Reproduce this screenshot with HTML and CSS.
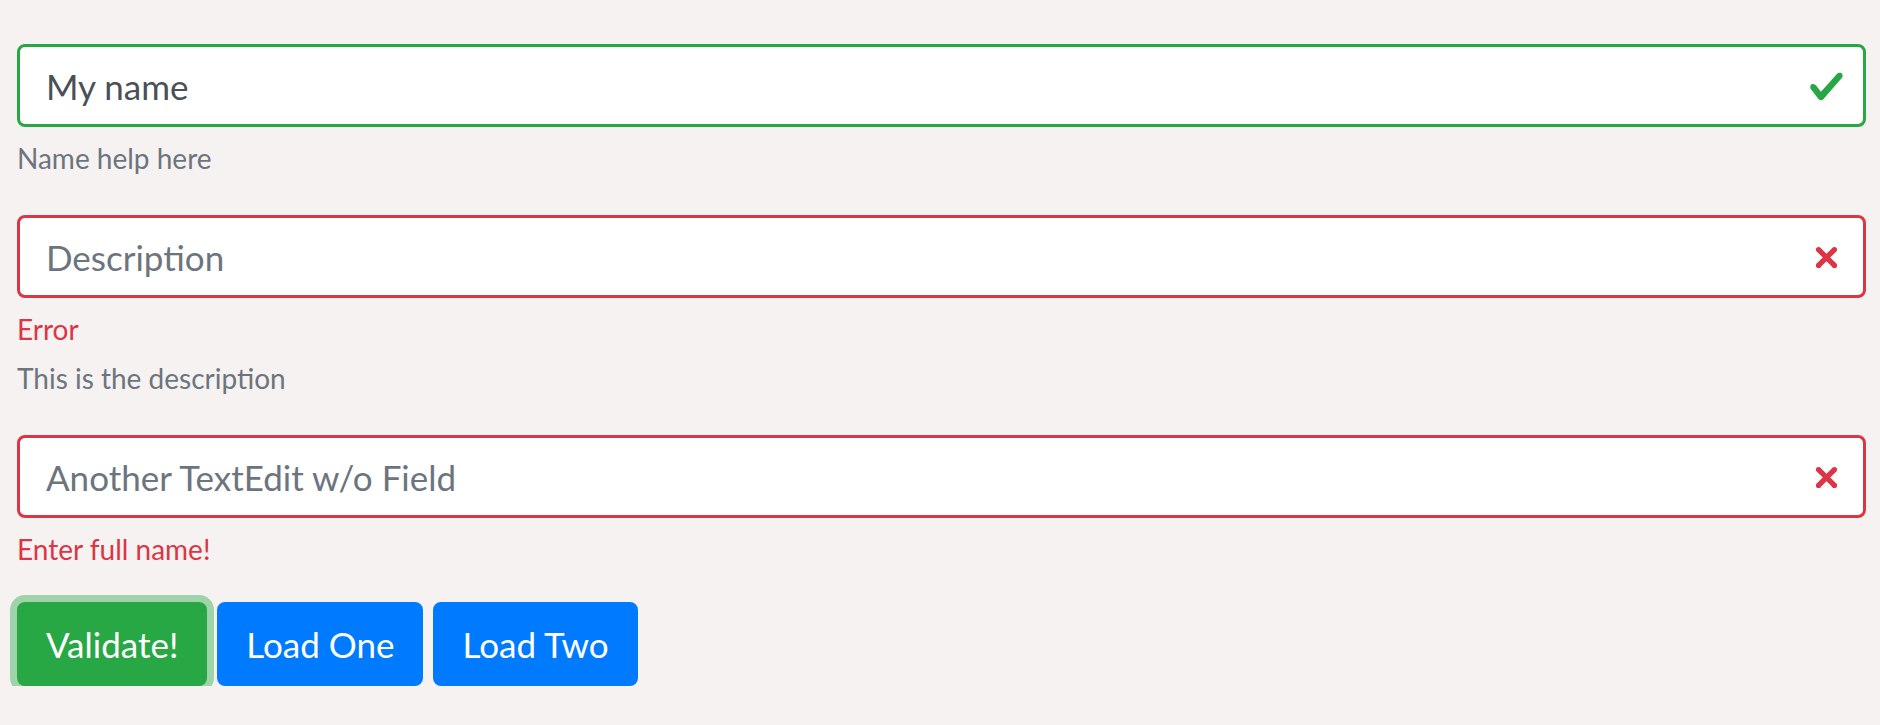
FILE: index.html
```html
<!DOCTYPE html>
<html lang="en">
<head>
<meta charset="utf-8">
<title>Validation form</title>
<link rel="stylesheet" href="styles.css">
</head>
<body>
<div class="page">
  <div class="group">
    <div class="field">
      <input class="control is-valid" type="text" value="My name">
      <svg class="state-icon" viewBox="0 0 8 8" aria-hidden="true"><path fill="#28a745" d="M2.3 6.73L.6 4.53c-.4-1.04.46-1.4 1.1-.8l1.1 1.4 3.4-3.8c.6-.63 1.6-.27 1.2.7l-4 4.6c-.43.5-.8.4-1.1.1z"/></svg>
    </div>
    <small class="help">Name help here</small>
  </div>

  <div class="group">
    <div class="field">
      <input class="control is-invalid" type="text" placeholder="Description">
      <svg class="state-icon" viewBox="-2 -2 7 7" aria-hidden="true" fill="#dc3545"><path stroke="#dc3545" d="M0 0l3 3m0-3L0 3"/><circle r=".5"/><circle cx="3" r=".5"/><circle cy="3" r=".5"/><circle cx="3" cy="3" r=".5"/></svg>
    </div>
    <div class="feedback">Error</div>
    <small class="help help-after">This is the description</small>
  </div>

  <div class="group group-last">
    <div class="field">
      <input class="control is-invalid" type="text" placeholder="Another TextEdit w/o Field">
      <svg class="state-icon" viewBox="-2 -2 7 7" aria-hidden="true" fill="#dc3545"><path stroke="#dc3545" d="M0 0l3 3m0-3L0 3"/><circle r=".5"/><circle cx="3" r=".5"/><circle cy="3" r=".5"/><circle cx="3" cy="3" r=".5"/></svg>
    </div>
    <div class="feedback">Enter full name!</div>
  </div>

  <div class="actions">
    <button class="btn btn-success is-focused" type="button">Validate!</button>
    <button class="btn btn-primary" type="button">Load One</button>
    <button class="btn btn-primary" type="button">Load Two</button>
  </div>
</div>
</body>
</html>
```

FILE: styles.css
```css
* {
  box-sizing: border-box;
}

html,
body {
  margin: 0;
  background: #f6f2f1;
}

body {
  font-family: "Lato", "Open Sans", sans-serif;
  color: #212529;
}

.page {
  padding: 44px 14px 0 17px;
}

.group {
  margin-bottom: 36px;
}

.group-last {
  margin-bottom: 32px;
}

.field {
  position: relative;
}

.control {
  display: block;
  width: 100%;
  height: 83px;
  padding: 0 64px 0 26px;
  font-family: "Lato", "Open Sans", sans-serif;
  font-size: 35px;
  color: #495057;
  background: #ffffff;
  border: 3px solid #ced4da;
  border-radius: 8px;
  outline: none;
}

.control::placeholder {
  color: #6c757d;
  opacity: 1;
}

.control.is-valid {
  border-color: #28a745;
}

.control.is-invalid {
  border-color: #dc3545;
}

.state-icon {
  position: absolute;
  right: 21px;
  top: 50%;
  width: 37px;
  height: 37px;
  margin-top: -18px;
}

.help,
.feedback {
  display: block;
  margin-top: 10px;
  font-size: 28px;
  line-height: 42px;
}

.help {
  color: #6c757d;
}

.help-after {
  margin-top: 7px;
}

.feedback {
  color: #dc3545;
}

.actions {
  display: flex;
  gap: 10px;
}

.btn {
  height: 84px;
  padding: 0 27px;
  font-family: "Lato", "Open Sans", sans-serif;
  font-size: 35px;
  font-weight: 400;
  color: #ffffff;
  border: 2px solid transparent;
  border-radius: 8px;
  cursor: pointer;
}

.btn-success {
  background: #28a745;
  border-color: #28a745;
}

.btn-primary {
  background: #007bff;
  border-color: #007bff;
}

.btn.is-focused {
  box-shadow: 0 0 0 7px rgba(72, 180, 97, 0.5);
}
```
